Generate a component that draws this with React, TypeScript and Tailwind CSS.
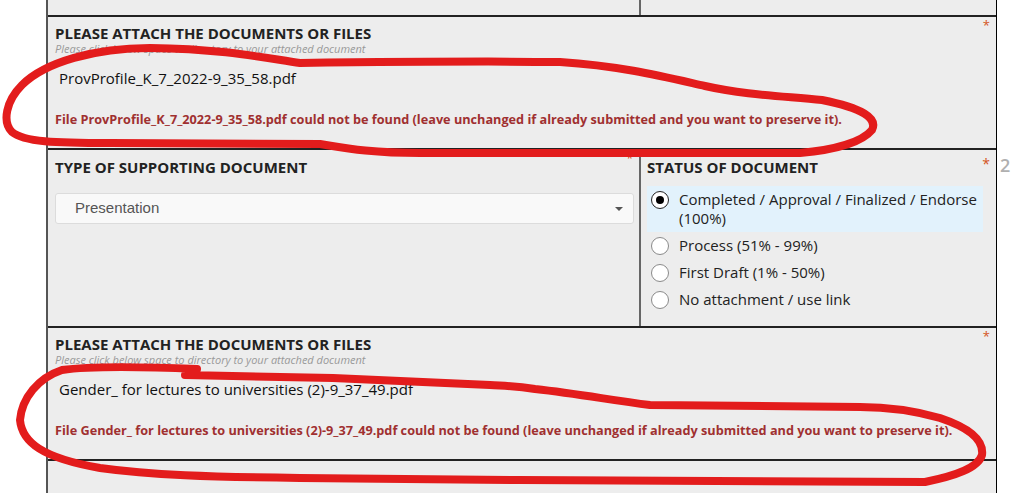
import React from 'react';

type AttachProps = {
  fileName: string;
};

function AttachSection({ fileName }: AttachProps) {
  return (
    <section className="relative h-[133px] shrink-0 border-b-2 border-[#222] pl-[7px] pt-[7px]">
      <span className="absolute right-[6px] top-[1px] text-[13px] leading-[14px] text-[#d4541c]">*</span>
      <h2 className="text-[15px] leading-[18px] font-bold text-[#222] uppercase">
        Please attach the documents or files
      </h2>
      <p className="text-[11px] leading-[14px] italic text-[#999]">
        Please click below space to directory to your attached document
      </p>
      <div className="mt-[12px] pl-[4px] text-[15px] leading-[20px] text-[#111]">{fileName}</div>
      <div className="mt-[22px] text-[12.7px] leading-[18px] font-bold text-[#a03030]">
        File {fileName} could not be found (leave unchanged if already submitted and you want to preserve it).
      </div>
    </section>
  );
}

const statusOptions = [
  'Completed / Approval / Finalized / Endorse (100%)',
  'Process (51% - 99%)',
  'First Draft (1% - 50%)',
  'No attachment / use link',
];

export default function App() {
  return (
    <div className="relative w-[1033px] h-[493px] overflow-hidden bg-white font-['Open_Sans',sans-serif]">
      <div className="ml-[46px] w-[951px] h-full flex flex-col border-l-2 border-l-[#555] border-r border-r-black bg-[#ededed]">
        {/* previous row, cut off */}
        <div className="flex h-[17px] shrink-0 border-b-2 border-[#222]">
          <div className="w-[593px] border-r-2 border-[#666]" />
          <div className="flex-1" />
        </div>

        <AttachSection fileName="ProvProfile_K_7_2022-9_35_58.pdf" />

        {/* type + status */}
        <div className="flex h-[178px] shrink-0 border-b-2 border-[#222]">
          <div className="relative w-[593px] border-r-2 border-[#666] pl-[7px] pr-[5px] pt-[8px]">
            <span className="absolute right-[6px] top-[3px] text-[12px] leading-[12px] text-[#d4541c]">*</span>
            <h2 className="text-[15px] leading-[18px] font-bold text-[#222] uppercase">
              Type of supporting document
            </h2>
            <div className="mt-[17px] h-[31px] flex items-center justify-between rounded-[3px] border border-[#dcdcdc] bg-[#f9f9f9] pl-[19px] pr-[10px]">
              <span className="font-['Liberation_Sans',sans-serif] text-[15px] text-[#555]">Presentation</span>
              <span className="w-0 h-0 border-l-[4px] border-r-[4px] border-t-[4px] border-l-transparent border-r-transparent border-t-[#555]" />
            </div>
          </div>
          <div className="relative flex-1 pl-[6px] pr-[13px] pt-[8px]">
            <span className="absolute right-[6px] top-[7px] text-[14px] leading-[14px] text-[#d4541c]">*</span>
            <h2 className="text-[15px] leading-[18px] font-bold text-[#222] uppercase">Status of document</h2>
            <div className="mt-[10px] flex flex-col">
              {statusOptions.map((opt, i) => (
                <label
                  key={opt}
                  className={`flex items-start gap-[10px] py-[4px] pl-[4px] pr-[6px] ${i === 0 ? 'bg-[#e2f2fc]' : ''}`}
                >
                  <span
                    className={`mt-[1px] shrink-0 w-[18px] h-[18px] rounded-full flex items-center justify-center bg-white ${
                      i === 0 ? 'border-[1.5px] border-[#222]' : 'border border-[#8a8a8a]'
                    }`}
                  >
                    {i === 0 && <span className="w-[8px] h-[8px] rounded-full bg-black" />}
                  </span>
                  <span className="text-[15px] leading-[19px] text-[#222]">{opt}</span>
                </label>
              ))}
            </div>
          </div>
        </div>

        <AttachSection fileName="Gender_ for lectures to universities (2)-9_37_49.pdf" />

        <div className="flex-1" />
      </div>

      {/* question number, outside the box */}
      <span className="absolute left-[1000px] top-[153px] text-[18px] leading-[24px] font-semibold text-[#b0b0b0]">2</span>

      {/* hand-drawn red annotations */}
      <svg
        className="absolute inset-0 pointer-events-none"
        width="1033"
        height="493"
        viewBox="0 0 1033 493"
        fill="none"
      >
        <path
          d="M 560 62 C 480 61, 380 62, 300 63 C 265 58, 225 49, 150 48 C 95 48, 45 62, 22 85 C 6 101, 2 122, 12 132 C 24 142, 55 143, 110 143 L 320 144 C 345 148, 370 153, 420 153 L 800 153 C 835 150, 862 142, 872 130 C 878 118, 862 108, 822 100 C 782 96, 745 95, 705 86 C 665 77, 622 66, 560 62"
          stroke="#e31c1c"
          strokeWidth="8"
          strokeLinecap="round"
          strokeLinejoin="round"
        />
        <path
          d="M 197 369 C 150 367, 90 366, 62 370 C 38 378, 22 398, 20 420 C 22 442, 42 458, 100 468 C 150 475, 210 477, 300 478 L 520 480 L 925 482 C 955 476, 978 468, 982 455 C 984 440, 970 428, 940 418 C 912 410, 882 407, 860 407 L 650 405 C 610 400, 580 394, 535 389 C 515 386, 505 386, 490 385 L 333 378 L 185 375"
          stroke="#e31c1c"
          strokeWidth="8"
          strokeLinecap="round"
          strokeLinejoin="round"
        />
      </svg>
    </div>
  );
}
